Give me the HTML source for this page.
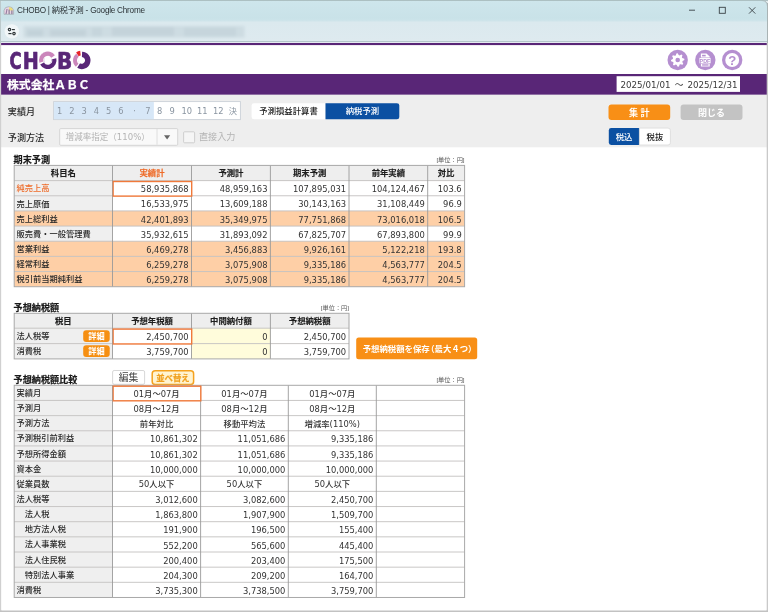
<!DOCTYPE html>
<html lang="ja"><head><meta charset="utf-8"><title>CHOBO | 納税予測</title>
<style>
html,body{margin:0;padding:0;}
body{width:768px;height:612px;overflow:hidden;background:#fff;position:relative;filter:blur(0.35px);
 font-family:"DejaVu Sans","Liberation Sans","Noto Sans CJK JP",sans-serif;color:#2b2b2b;}
#g{position:absolute;left:0;top:0;width:768px;height:612px;display:block;will-change:transform;}
#tx{position:absolute;left:0;top:0;width:768px;height:612px;will-change:transform;}
.t{position:absolute;white-space:nowrap;overflow:visible;box-sizing:border-box;}
.title{font-family:"Liberation Sans","Noto Sans CJK JP",sans-serif;font-size:8.2px;letter-spacing:-0.24px;color:#2c3438;}
.company{font-family:"Liberation Sans","Noto Sans CJK JP",sans-serif;font-size:11.85px;font-weight:bold;color:#fff;-webkit-text-stroke:0.25px #fff;}
.date{font-size:8.7px;text-align:center;color:#3a3a3a;}
.wd{font-family:"Noto Sans CJK JP",sans-serif;padding:0 4.2px;}
.wm{font-family:"Noto Sans CJK JP",sans-serif;}
.lbl{font-family:"Liberation Sans","Noto Sans CJK JP",sans-serif;font-size:9.1px;color:#2a2a2a;font-weight:500;}
.month{font-size:8.3px;text-align:center;color:#8a95a1;}
.tab{font-size:8.35px;font-weight:500;text-align:center;color:#222;font-family:"Liberation Sans","Noto Sans CJK JP",sans-serif;}
.tabon{color:#fff;}
.combo{font-size:8.55px;color:#b4b4b4;font-family:"DejaVu Sans","Noto Sans CJK JP",sans-serif;}
.chk{font-size:9.1px;color:#b4b4b4;font-family:"Liberation Sans","Noto Sans CJK JP",sans-serif;}
.btn{font-size:9.0px;font-weight:bold;color:#fff;text-align:center;font-family:"Liberation Sans","Noto Sans CJK JP",sans-serif;}
.tax{font-size:8.4px;font-weight:500;text-align:center;color:#222;font-family:"Liberation Sans","Noto Sans CJK JP",sans-serif;}
.taxon{color:#fff;}
.sec{font-size:9.1px;font-weight:bold;color:#1a1a1a;-webkit-text-stroke:0.22px #1a1a1a;font-family:"Liberation Sans","Noto Sans CJK JP",sans-serif;}
.unit{font-size:6.2px;color:#555;text-align:right;font-family:"Liberation Sans","Noto Sans CJK JP",sans-serif;}
.c{font-size:8.35px;color:#333;}
.h{text-align:center;font-weight:bold;color:#1e1e1e;-webkit-text-stroke:0.15px currentColor;font-family:"Liberation Sans","Noto Sans CJK JP",sans-serif;}
.l{padding-left:2.2px;font-weight:500;font-size:8.25px;font-family:"Liberation Sans","Noto Sans CJK JP",sans-serif;color:#2a2a2a;}
.ind{padding-left:10.6px;}
.n{text-align:right;padding-right:2.9px;}
.m{text-align:center;font-weight:500;font-family:"DejaVu Sans","Noto Sans CJK JP",sans-serif;}
.org{color:#ee6c2a;}
.det{font-size:8.2px;font-weight:bold;color:#fff;text-align:center;font-family:"Liberation Sans","Noto Sans CJK JP",sans-serif;}
.save{padding-left:2.2px;font-size:8.4px;font-weight:bold;color:#fff;text-align:center;font-family:"Liberation Sans","Noto Sans CJK JP",sans-serif;}
.edit{font-size:9.8px;color:#444;text-align:center;font-family:"Liberation Sans","Noto Sans CJK JP",sans-serif;}
.sort{font-size:8.4px;font-weight:bold;color:#f0a01e;-webkit-text-stroke:0.2px #f0a01e;text-align:center;font-family:"Liberation Sans","Noto Sans CJK JP",sans-serif;}
</style></head>
<body>
<svg id="g" width="768" height="612" viewBox="0 0 768 612">
<defs><linearGradient id="gtitle" x1="0" y1="0" x2="0" y2="1"><stop offset="0" stop-color="#cee6ec"/><stop offset="0.85" stop-color="#c9e2e8"/><stop offset="1" stop-color="#cce4ea"/></linearGradient><linearGradient id="gaddr" x1="0" y1="0" x2="0" y2="1"><stop offset="0" stop-color="#cfe4ea"/><stop offset="0.1" stop-color="#dbe9ee"/><stop offset="1" stop-color="#deeaef"/></linearGradient><filter id="blur" x="-5%" y="-30%" width="110%" height="160%"><feGaussianBlur stdDeviation="1.6"/></filter></defs>
<rect x="0.00" y="0.00" width="768.00" height="21.00" fill="url(#gtitle)" />
<rect x="0.00" y="20.40" width="768.00" height="21.00" fill="url(#gaddr)" />
<rect x="0.00" y="41.00" width="768.00" height="1.10" fill="#b3c6ca" />
<rect x="0.00" y="42.10" width="768.00" height="0.90" fill="#e4e8ef" />
<rect x="0.00" y="43.00" width="768.00" height="2.30" fill="#592677" />
<rect x="0.00" y="45.30" width="768.00" height="28.70" fill="#ffffff" />
<rect x="0.00" y="74.00" width="768.00" height="20.80" fill="#592677" />
<rect x="0.00" y="94.80" width="768.00" height="52.80" fill="#eeeeee" />
<rect x="0.00" y="147.50" width="768.00" height="464.50" fill="#ffffff" />
<g transform="translate(3.4,5.9)" opacity="0.9"><path d="M0.6 8.4 L0.6 4.4 Q1.4 0.8 5.3 0.8 Q9.6 0.8 10.2 4.4 L10.2 8.4 Z" fill="#ecd3e4" stroke="#97a3a8" stroke-width="0.7"/><path d="M5.6 1.4 Q9 1.2 9.6 4.6 L5.8 4.6 Z" fill="#f0df6e"/><rect x="2.6" y="3.2" width="1.1" height="5" fill="#8d6f96" transform="skewX(-12) translate(1.2,0)"/><rect x="5.2" y="3.6" width="1" height="4.6" fill="#6f5f7e"/><rect x="8" y="4.4" width="1" height="3.8" fill="#6f5f7e"/></g>
<line x1="689.00" y1="10.20" x2="695.00" y2="10.20" stroke="#3a4246" stroke-width="0.9" />
<rect x="719.30" y="7.30" width="6.00" height="6.00" fill="none" stroke="#3a4246" stroke-width="0.9"/>
<line x1="749.00" y1="7.30" x2="755.30" y2="13.60" stroke="#3a4246" stroke-width="0.9" />
<line x1="755.30" y1="7.30" x2="749.00" y2="13.60" stroke="#3a4246" stroke-width="0.9" />
<circle cx="11.8" cy="31.4" r="7.2" fill="#f1f6f8"/>
<g stroke="#2e3437" stroke-width="1.15" fill="none"><circle cx="9.5" cy="29.6" r="1.25"/><line x1="11.9" y1="29.6" x2="14.9" y2="29.6"/><circle cx="14" cy="33.6" r="1.25"/><line x1="8.4" y1="33.6" x2="11.6" y2="33.6"/></g>
<g filter="url(#blur)"><rect x="23.5" y="26" width="221" height="11.5" fill="#cddce2"/><rect x="27" y="29.5" width="16" height="7" fill="#c2d2d9"/><rect x="50" y="29.5" width="36" height="7" fill="#c3d2d9"/><rect x="92" y="27.5" width="10" height="9" fill="#c6d5dc"/><rect x="112" y="27" width="62" height="9" fill="#c4d3da"/><rect x="184" y="27.5" width="52" height="9" fill="#c6d5dc"/></g>
<text transform="translate(9.377,68.754) scale(0.1645,0.2305)" x="0" y="0" font-size="100" font-weight="bold" font-family="'DejaVu Sans','Liberation Sans',sans-serif" fill="#592677" stroke="#592677" stroke-width="3.65" stroke-linejoin="round">C</text>
<text transform="translate(22.669,68.900) scale(0.1924,0.2329)" x="0" y="0" font-size="100" font-weight="bold" font-family="'DejaVu Sans','Liberation Sans',sans-serif" fill="#592677" stroke="#592677" stroke-width="3.12" stroke-linejoin="round">H</text>
<text transform="translate(38.620,68.270) scale(0.2160,0.2199)" x="0" y="0" font-size="100" font-weight="bold" font-family="'DejaVu Sans','Liberation Sans',sans-serif" fill="#592677" stroke="#592677" stroke-width="2.78" stroke-linejoin="round">O</text>
<text transform="translate(57.100,68.900) scale(0.2000,0.2345)" x="0" y="0" font-size="100" font-weight="bold" font-family="'DejaVu Sans','Liberation Sans',sans-serif" fill="#592677" stroke="#592677" stroke-width="3.00" stroke-linejoin="round">B</text>
<text transform="translate(72.533,68.274) scale(0.2133,0.2172)" x="0" y="0" font-size="100" font-weight="bold" font-family="'DejaVu Sans','Liberation Sans',sans-serif" fill="#592677" stroke="#592677" stroke-width="2.81" stroke-linejoin="round">O</text>
<circle cx="47.8" cy="60.3" r="6.4" fill="none" stroke="#fff" stroke-width="5.6"/>
<path d="M54.20 58.70 A6.6 6.6 0 0 1 42.03 63.50" fill="none" stroke="#592677" stroke-width="4.3"/>
<path d="M41.49 62.23 A6.6 6.6 0 0 1 53.14 56.42" fill="none" stroke="#cb86bb" stroke-width="4.3"/>
<circle cx="81.6" cy="60.4" r="6.2" fill="none" stroke="#fff" stroke-width="6.2"/>
<path d="M82.01 54.40 A6.0 6.0 0 1 1 78.62 65.49" fill="none" stroke="#592677" stroke-width="5.4"/>
<path d="M77.18 65.30 A6.6 6.6 0 0 1 77.54 55.20" fill="none" stroke="#cb86bb" stroke-width="3.9"/>
<path d="M77.39 54.30 A7.0 7.0 0 0 1 80.45 53.15" fill="none" stroke="#e8232a" stroke-width="4.6"/>
<circle cx="677.7" cy="60" r="10.2" fill="#b58fd0"/>
<circle cx="705.3" cy="60" r="10.2" fill="#b58fd0"/>
<circle cx="732.2" cy="60" r="10.2" fill="#b58fd0"/>
<polygon points="684.27,58.69 684.40,60.00 682.60,60.98 682.32,61.91 683.27,63.72 682.44,64.74 680.48,64.16 679.61,64.62 679.01,66.57 677.70,66.70 676.72,64.90 675.79,64.62 673.98,65.57 672.96,64.74 673.54,62.78 673.08,61.91 671.13,61.31 671.00,60.00 672.80,59.02 673.08,58.09 672.13,56.28 672.96,55.26 674.92,55.84 675.79,55.38 676.39,53.43 677.70,53.30 678.68,55.10 679.61,55.38 681.42,54.43 682.44,55.26 681.86,57.22 682.32,58.09" fill="#fff"/>
<circle cx="677.7" cy="60" r="2.3" fill="#b58fd0"/>
<path d="M700.9 53.4 h5.6 l3.2 3.2 v10 h-8.8 Z" fill="#fff"/>
<rect x="699.0999999999999" y="57.8" width="11.8" height="5.6" fill="#fff" stroke="#b58fd0" stroke-width="0.5"/>
<rect x="702.0999999999999" y="54.8" width="3.6" height="1.6" fill="#b58fd0"/>
<rect x="702.0999999999999" y="64.3" width="6.4" height="1.3" fill="#b58fd0"/>
<text x="705.0" y="62.5" font-size="5.4" font-weight="bold" font-family="'Liberation Sans',sans-serif" fill="#b58fd0" text-anchor="middle">PDF</text>
<circle cx="732.2" cy="60" r="6.95" fill="#fff"/>
<text x="732.2" y="64.7" font-size="13.2" font-weight="bold" font-family="'Liberation Sans',sans-serif" fill="#b58fd0" text-anchor="middle">?</text>
<rect x="616.60" y="76.20" width="123.40" height="15.70" fill="#ffffff" />
<rect x="53.60" y="101.60" width="186.80" height="18.00" fill="#ffffff" stroke="#cbd1d8" stroke-width="0.9"/>
<rect x="54.05" y="102.05" width="99.80" height="17.10" fill="#d7e7f7" />
<path d="M254 103.2 H325.5 V119.3 H254 Q251.6 119.3 251.6 117 V105.6 Q251.6 103.2 254 103.2 Z" fill="#fff"/>
<path d="M325.5 103.2 H396.9 Q399.3 103.2 399.3 105.6 V117 Q399.3 119.3 396.9 119.3 H325.5 Z" fill="#0b50a2"/>
<rect x="59.70" y="128.60" width="118.00" height="16.70" fill="#f9f9f9" stroke="#cdcdcd" stroke-width="0.8" rx="1"/>
<line x1="157.00" y1="128.80" x2="157.00" y2="144.80" stroke="#d8d8d8" stroke-width="0.8" />
<path d="M164 135.3 h6.2 l-3.1 4.2 Z" fill="#666"/>
<rect x="183.60" y="131.80" width="11.00" height="11.00" fill="#f5f5f5" stroke="#cacaca" stroke-width="0.9" rx="1"/>
<rect x="608.50" y="104.40" width="61.70" height="15.50" fill="#f88f16" rx="3"/>
<rect x="680.60" y="104.40" width="61.90" height="15.50" fill="#c3c3c3" rx="3"/>
<path d="M611.2 128.1 H639.4 V145 H611.2 Q608.8 145 608.8 142.6 V130.5 Q608.8 128.1 611.2 128.1 Z" fill="#0b50a2"/>
<path d="M639.4 128.1 H668 Q670.4 128.1 670.4 130.5 V142.6 Q670.4 145 668 145 H639.4 Z" fill="#fff" stroke="#d6d6d6" stroke-width="0.7"/>
<rect x="14.20" y="165.40" width="450.40" height="121.32" fill="#ffffff" />
<rect x="14.20" y="165.40" width="450.40" height="15.20" fill="#eeeeee" />
<rect x="14.20" y="180.60" width="98.30" height="15.16" fill="#efefef" />
<rect x="14.20" y="195.76" width="98.30" height="15.16" fill="#efefef" />
<rect x="14.20" y="210.92" width="450.40" height="15.16" fill="#fecfa6" />
<rect x="14.20" y="226.08" width="98.30" height="15.16" fill="#efefef" />
<rect x="14.20" y="241.24" width="450.40" height="15.16" fill="#fecfa6" />
<rect x="14.20" y="256.40" width="450.40" height="15.16" fill="#fecfa6" />
<rect x="14.20" y="271.56" width="450.40" height="15.16" fill="#fecfa6" />
<line x1="14.20" y1="180.60" x2="464.60" y2="180.60" stroke="#c3c1bf" stroke-width="0.9" />
<line x1="14.20" y1="195.76" x2="464.60" y2="195.76" stroke="#c3c1bf" stroke-width="0.9" />
<line x1="14.20" y1="210.92" x2="464.60" y2="210.92" stroke="#c3c1bf" stroke-width="0.9" />
<line x1="14.20" y1="226.08" x2="464.60" y2="226.08" stroke="#c3c1bf" stroke-width="0.9" />
<line x1="14.20" y1="241.24" x2="464.60" y2="241.24" stroke="#c3c1bf" stroke-width="0.9" />
<line x1="14.20" y1="256.40" x2="464.60" y2="256.40" stroke="#c3c1bf" stroke-width="0.9" />
<line x1="14.20" y1="271.56" x2="464.60" y2="271.56" stroke="#c3c1bf" stroke-width="0.9" />
<line x1="112.50" y1="165.40" x2="112.50" y2="286.72" stroke="#9a9a9a" stroke-width="0.9" />
<line x1="191.50" y1="165.40" x2="191.50" y2="286.72" stroke="#9a9a9a" stroke-width="0.9" />
<line x1="270.40" y1="165.40" x2="270.40" y2="286.72" stroke="#9a9a9a" stroke-width="0.9" />
<line x1="349.00" y1="165.40" x2="349.00" y2="286.72" stroke="#9a9a9a" stroke-width="0.9" />
<line x1="427.70" y1="165.40" x2="427.70" y2="286.72" stroke="#9a9a9a" stroke-width="0.9" />
<rect x="14.20" y="165.40" width="450.40" height="121.32" fill="none" stroke="#a8a8a8" stroke-width="1"/>
<rect x="113.10" y="181.50" width="78.60" height="14.61" fill="#ffffff" stroke="#f0793a" stroke-width="1.4"/>
<line x1="112.50" y1="181.00" x2="112.50" y2="196.56" stroke="#9a9a9a" stroke-width="0.9" opacity="0.55"/>
<rect x="14.20" y="313.30" width="334.80" height="45.60" fill="#ffffff" />
<rect x="14.20" y="313.30" width="334.80" height="14.90" fill="#eeeeee" />
<rect x="14.20" y="328.20" width="98.30" height="15.40" fill="#efefef" />
<rect x="14.20" y="343.60" width="98.30" height="15.30" fill="#efefef" />
<rect x="191.50" y="328.20" width="78.90" height="15.40" fill="#fffcdb" />
<rect x="191.50" y="343.60" width="78.90" height="15.30" fill="#fffcdb" />
<line x1="14.20" y1="328.20" x2="349.00" y2="328.20" stroke="#c3c1bf" stroke-width="0.9" />
<line x1="14.20" y1="343.60" x2="349.00" y2="343.60" stroke="#c3c1bf" stroke-width="0.9" />
<line x1="112.50" y1="313.30" x2="112.50" y2="358.90" stroke="#9a9a9a" stroke-width="0.9" />
<line x1="191.50" y1="313.30" x2="191.50" y2="358.90" stroke="#9a9a9a" stroke-width="0.9" />
<line x1="270.40" y1="313.30" x2="270.40" y2="358.90" stroke="#9a9a9a" stroke-width="0.9" />
<rect x="14.20" y="313.30" width="334.80" height="45.60" fill="none" stroke="#a8a8a8" stroke-width="1"/>
<rect x="113.10" y="329.10" width="78.60" height="14.85" fill="#ffffff" stroke="#f0793a" stroke-width="1.4"/>
<line x1="112.50" y1="328.60" x2="112.50" y2="344.40" stroke="#9a9a9a" stroke-width="0.9" opacity="0.55"/>
<rect x="83.20" y="330.20" width="26.50" height="11.70" fill="#f68f12" rx="3"/>
<rect x="83.20" y="345.20" width="26.50" height="11.70" fill="#f68f12" rx="3"/>
<rect x="356.20" y="337.50" width="121.00" height="21.80" fill="#f88f16" rx="2.5"/>
<rect x="112.60" y="370.50" width="32.00" height="13.80" fill="#ffffff" stroke="#cdcdcd" stroke-width="0.8" rx="1.5"/>
<rect x="152.20" y="370.70" width="41.40" height="13.70" fill="#fff4d2" stroke="#f5a21e" stroke-width="1.5" rx="3"/>
<rect x="14.20" y="385.30" width="450.40" height="212.17" fill="#ffffff" />
<rect x="14.20" y="385.30" width="98.30" height="15.15" fill="#efefef" />
<rect x="14.20" y="400.45" width="98.30" height="15.16" fill="#efefef" />
<rect x="14.20" y="415.61" width="98.30" height="15.15" fill="#efefef" />
<rect x="14.20" y="430.76" width="98.30" height="15.16" fill="#efefef" />
<rect x="14.20" y="445.92" width="98.30" height="15.15" fill="#efefef" />
<rect x="14.20" y="461.07" width="98.30" height="15.16" fill="#efefef" />
<rect x="14.20" y="476.23" width="98.30" height="15.15" fill="#efefef" />
<rect x="14.20" y="491.38" width="98.30" height="15.16" fill="#efefef" />
<rect x="14.20" y="506.54" width="98.30" height="15.15" fill="#efefef" />
<rect x="14.20" y="521.69" width="98.30" height="15.16" fill="#efefef" />
<rect x="14.20" y="536.85" width="98.30" height="15.15" fill="#efefef" />
<rect x="14.20" y="552.00" width="98.30" height="15.15" fill="#efefef" />
<rect x="14.20" y="567.16" width="98.30" height="15.16" fill="#efefef" />
<rect x="14.20" y="582.32" width="98.30" height="15.15" fill="#efefef" />
<line x1="14.20" y1="400.45" x2="464.60" y2="400.45" stroke="#c3c1bf" stroke-width="0.9" />
<line x1="14.20" y1="415.61" x2="464.60" y2="415.61" stroke="#c3c1bf" stroke-width="0.9" />
<line x1="14.20" y1="430.76" x2="464.60" y2="430.76" stroke="#c3c1bf" stroke-width="0.9" />
<line x1="14.20" y1="445.92" x2="464.60" y2="445.92" stroke="#c3c1bf" stroke-width="0.9" />
<line x1="14.20" y1="461.07" x2="464.60" y2="461.07" stroke="#c3c1bf" stroke-width="0.9" />
<line x1="14.20" y1="476.23" x2="464.60" y2="476.23" stroke="#c3c1bf" stroke-width="0.9" />
<line x1="14.20" y1="491.38" x2="464.60" y2="491.38" stroke="#c3c1bf" stroke-width="0.9" />
<line x1="14.20" y1="506.54" x2="464.60" y2="506.54" stroke="#c3c1bf" stroke-width="0.9" />
<line x1="14.20" y1="521.69" x2="464.60" y2="521.69" stroke="#c3c1bf" stroke-width="0.9" />
<line x1="14.20" y1="536.85" x2="464.60" y2="536.85" stroke="#c3c1bf" stroke-width="0.9" />
<line x1="14.20" y1="552.00" x2="464.60" y2="552.00" stroke="#c3c1bf" stroke-width="0.9" />
<line x1="14.20" y1="567.16" x2="464.60" y2="567.16" stroke="#c3c1bf" stroke-width="0.9" />
<line x1="14.20" y1="582.32" x2="464.60" y2="582.32" stroke="#c3c1bf" stroke-width="0.9" />
<line x1="112.50" y1="385.30" x2="112.50" y2="597.47" stroke="#9a9a9a" stroke-width="0.9" />
<line x1="200.60" y1="385.30" x2="200.60" y2="597.47" stroke="#9a9a9a" stroke-width="0.9" />
<line x1="288.30" y1="385.30" x2="288.30" y2="597.47" stroke="#9a9a9a" stroke-width="0.9" />
<line x1="376.30" y1="385.30" x2="376.30" y2="597.47" stroke="#9a9a9a" stroke-width="0.9" />
<rect x="14.20" y="385.30" width="450.40" height="212.17" fill="none" stroke="#a8a8a8" stroke-width="1"/>
<rect x="113.10" y="386.20" width="87.70" height="14.61" fill="#ffffff" stroke="#f0793a" stroke-width="1.4"/>
<line x1="112.50" y1="385.70" x2="112.50" y2="401.25" stroke="#9a9a9a" stroke-width="0.9" opacity="0.55"/>
<path d="M768 0 H761.5 Q767.6 0.4 768 6.5 Z" fill="#e4ecee"/>
<path d="M761.5 0.45 Q767.5 0.5 767.5 6.5" fill="none" stroke="#a9b6b8" stroke-width="0.9"/>
<path d="M0 0 H5 Q0.4 0.4 0 5 Z" fill="#dfe8ea"/>
<path d="M0 612 H5.5 Q0.5 611.5 0 606.5 Z" fill="#e6e6e6"/>
<path d="M768 612 H762.5 Q767.5 611.5 768 606.5 Z" fill="#e6e6e6"/>
<rect x="0.00" y="0.00" width="1.00" height="43.00" fill="#bcc9cb" />
<rect x="0.00" y="43.00" width="1.15" height="569.00" fill="#d0d0d0" />
<rect x="767.00" y="3.00" width="1.00" height="40.00" fill="#a9b3b4" />
<rect x="766.70" y="43.00" width="1.30" height="569.00" fill="#c9c9c9" />
<rect x="0.00" y="0.00" width="768.00" height="0.90" fill="#a9bbbe" />
<rect x="0.00" y="610.50" width="768.00" height="1.50" fill="#c2c2c2" />
</svg>
<div id="tx">
<div class="t title" style="left:17.00px;top:3.50px;width:200.00px;height:13.00px;line-height:13.00px;">CHOBO | 納税予測 - Google Chrome</div>
<div class="t company" style="left:7.00px;top:77.00px;width:120.00px;height:16.00px;line-height:16.00px;">株式会社ＡＢＣ</div>
<div class="t date" style="left:617.20px;top:76.70px;width:123.60px;height:15.40px;line-height:15.40px;">2025/01/01<span class="wd">～</span>2025/12/31</div>
<div class="t lbl" style="left:7.80px;top:104.25px;width:50.00px;height:17.00px;line-height:17.00px;">実績月</div>
<div class="t lbl" style="left:7.80px;top:129.55px;width:50.00px;height:17.00px;line-height:17.00px;">予測方法</div>
<div class="t month" style="left:49.70px;top:102.80px;width:20.00px;height:17.60px;line-height:17.60px;">1</div>
<div class="t month" style="left:62.00px;top:102.80px;width:20.00px;height:17.60px;line-height:17.60px;">2</div>
<div class="t month" style="left:74.20px;top:102.80px;width:20.00px;height:17.60px;line-height:17.60px;">3</div>
<div class="t month" style="left:86.40px;top:102.80px;width:20.00px;height:17.60px;line-height:17.60px;">4</div>
<div class="t month" style="left:98.60px;top:102.80px;width:20.00px;height:17.60px;line-height:17.60px;">5</div>
<div class="t month" style="left:110.80px;top:102.80px;width:20.00px;height:17.60px;line-height:17.60px;">6</div>
<div class="t month" style="left:124.70px;top:102.80px;width:20.00px;height:17.60px;line-height:17.60px;">·</div>
<div class="t month" style="left:138.00px;top:102.80px;width:20.00px;height:17.60px;line-height:17.60px;">7</div>
<div class="t month" style="left:149.70px;top:102.80px;width:20.00px;height:17.60px;line-height:17.60px;">8</div>
<div class="t month" style="left:162.20px;top:102.80px;width:20.00px;height:17.60px;line-height:17.60px;">9</div>
<div class="t month" style="left:176.70px;top:102.80px;width:20.00px;height:17.60px;line-height:17.60px;">10</div>
<div class="t month" style="left:192.20px;top:102.80px;width:20.00px;height:17.60px;line-height:17.60px;">11</div>
<div class="t month" style="left:208.30px;top:102.80px;width:20.00px;height:17.60px;line-height:17.60px;">12</div>
<div class="t month" style="left:223.00px;top:102.80px;width:20.00px;height:17.60px;line-height:17.60px;">決</div>
<div class="t tab" style="left:251.60px;top:103.20px;width:73.90px;height:16.10px;line-height:16.10px;">予測損益計算書</div>
<div class="t tab tabon" style="left:325.50px;top:103.20px;width:73.80px;height:16.10px;line-height:16.10px;">納税予測</div>
<div class="t combo" style="left:65.60px;top:129.20px;width:92.00px;height:16.80px;line-height:16.80px;">増減率指定（110%）</div>
<div class="t chk" style="left:199.00px;top:129.30px;width:60.00px;height:17.00px;line-height:17.00px;">直接入力</div>
<div class="t btn" style="left:608.50px;top:105.70px;width:61.70px;height:15.50px;line-height:15.50px;">集 計</div>
<div class="t btn" style="left:680.60px;top:105.70px;width:61.90px;height:15.50px;line-height:15.50px;">閉じる</div>
<div class="t tax taxon" style="left:608.80px;top:129.40px;width:30.60px;height:16.90px;line-height:16.90px;">税込</div>
<div class="t tax" style="left:639.40px;top:129.40px;width:31.00px;height:16.90px;line-height:16.90px;">税抜</div>
<div class="t sec" style="left:13.60px;top:151.70px;width:100.00px;height:16.00px;line-height:16.00px;">期末予測</div>
<div class="t unit" style="left:419.00px;top:155.30px;width:45.60px;height:10.00px;line-height:10.00px;">[単位：円]</div>
<div class="t c h" style="left:14.20px;top:166.00px;width:98.30px;height:15.20px;line-height:15.20px;">科目名</div>
<div class="t c h org" style="left:112.50px;top:166.00px;width:79.00px;height:15.20px;line-height:15.20px;">実績計</div>
<div class="t c h" style="left:191.50px;top:166.00px;width:78.90px;height:15.20px;line-height:15.20px;">予測計</div>
<div class="t c h" style="left:270.40px;top:166.00px;width:78.60px;height:15.20px;line-height:15.20px;">期末予測</div>
<div class="t c h" style="left:349.00px;top:166.00px;width:78.70px;height:15.20px;line-height:15.20px;">前年実績</div>
<div class="t c h" style="left:427.70px;top:166.00px;width:36.90px;height:15.20px;line-height:15.20px;">対比</div>
<div class="t c l org" style="left:14.20px;top:181.40px;width:98.30px;height:15.16px;line-height:15.16px;">純売上高</div>
<div class="t c n" style="left:112.50px;top:182.30px;width:79.00px;height:15.16px;line-height:15.16px;">58,935,868</div>
<div class="t c n" style="left:191.50px;top:182.30px;width:78.90px;height:15.16px;line-height:15.16px;">48,959,163</div>
<div class="t c n" style="left:270.40px;top:182.30px;width:78.60px;height:15.16px;line-height:15.16px;">107,895,031</div>
<div class="t c n" style="left:349.00px;top:182.30px;width:78.70px;height:15.16px;line-height:15.16px;">104,124,467</div>
<div class="t c n" style="left:427.70px;top:182.30px;width:36.90px;height:15.16px;line-height:15.16px;">103.6</div>
<div class="t c l" style="left:14.20px;top:196.56px;width:98.30px;height:15.16px;line-height:15.16px;">売上原価</div>
<div class="t c n" style="left:112.50px;top:197.46px;width:79.00px;height:15.16px;line-height:15.16px;">16,533,975</div>
<div class="t c n" style="left:191.50px;top:197.46px;width:78.90px;height:15.16px;line-height:15.16px;">13,609,188</div>
<div class="t c n" style="left:270.40px;top:197.46px;width:78.60px;height:15.16px;line-height:15.16px;">30,143,163</div>
<div class="t c n" style="left:349.00px;top:197.46px;width:78.70px;height:15.16px;line-height:15.16px;">31,108,449</div>
<div class="t c n" style="left:427.70px;top:197.46px;width:36.90px;height:15.16px;line-height:15.16px;">96.9</div>
<div class="t c l" style="left:14.20px;top:211.72px;width:98.30px;height:15.16px;line-height:15.16px;">売上総利益</div>
<div class="t c n" style="left:112.50px;top:212.62px;width:79.00px;height:15.16px;line-height:15.16px;">42,401,893</div>
<div class="t c n" style="left:191.50px;top:212.62px;width:78.90px;height:15.16px;line-height:15.16px;">35,349,975</div>
<div class="t c n" style="left:270.40px;top:212.62px;width:78.60px;height:15.16px;line-height:15.16px;">77,751,868</div>
<div class="t c n" style="left:349.00px;top:212.62px;width:78.70px;height:15.16px;line-height:15.16px;">73,016,018</div>
<div class="t c n" style="left:427.70px;top:212.62px;width:36.90px;height:15.16px;line-height:15.16px;">106.5</div>
<div class="t c l" style="left:14.20px;top:226.88px;width:98.30px;height:15.16px;line-height:15.16px;">販売費・一般管理費</div>
<div class="t c n" style="left:112.50px;top:227.78px;width:79.00px;height:15.16px;line-height:15.16px;">35,932,615</div>
<div class="t c n" style="left:191.50px;top:227.78px;width:78.90px;height:15.16px;line-height:15.16px;">31,893,092</div>
<div class="t c n" style="left:270.40px;top:227.78px;width:78.60px;height:15.16px;line-height:15.16px;">67,825,707</div>
<div class="t c n" style="left:349.00px;top:227.78px;width:78.70px;height:15.16px;line-height:15.16px;">67,893,800</div>
<div class="t c n" style="left:427.70px;top:227.78px;width:36.90px;height:15.16px;line-height:15.16px;">99.9</div>
<div class="t c l" style="left:14.20px;top:242.04px;width:98.30px;height:15.16px;line-height:15.16px;">営業利益</div>
<div class="t c n" style="left:112.50px;top:242.94px;width:79.00px;height:15.16px;line-height:15.16px;">6,469,278</div>
<div class="t c n" style="left:191.50px;top:242.94px;width:78.90px;height:15.16px;line-height:15.16px;">3,456,883</div>
<div class="t c n" style="left:270.40px;top:242.94px;width:78.60px;height:15.16px;line-height:15.16px;">9,926,161</div>
<div class="t c n" style="left:349.00px;top:242.94px;width:78.70px;height:15.16px;line-height:15.16px;">5,122,218</div>
<div class="t c n" style="left:427.70px;top:242.94px;width:36.90px;height:15.16px;line-height:15.16px;">193.8</div>
<div class="t c l" style="left:14.20px;top:257.20px;width:98.30px;height:15.16px;line-height:15.16px;">経常利益</div>
<div class="t c n" style="left:112.50px;top:258.10px;width:79.00px;height:15.16px;line-height:15.16px;">6,259,278</div>
<div class="t c n" style="left:191.50px;top:258.10px;width:78.90px;height:15.16px;line-height:15.16px;">3,075,908</div>
<div class="t c n" style="left:270.40px;top:258.10px;width:78.60px;height:15.16px;line-height:15.16px;">9,335,186</div>
<div class="t c n" style="left:349.00px;top:258.10px;width:78.70px;height:15.16px;line-height:15.16px;">4,563,777</div>
<div class="t c n" style="left:427.70px;top:258.10px;width:36.90px;height:15.16px;line-height:15.16px;">204.5</div>
<div class="t c l" style="left:14.20px;top:272.36px;width:98.30px;height:15.16px;line-height:15.16px;">税引前当期純利益</div>
<div class="t c n" style="left:112.50px;top:273.26px;width:79.00px;height:15.16px;line-height:15.16px;">6,259,278</div>
<div class="t c n" style="left:191.50px;top:273.26px;width:78.90px;height:15.16px;line-height:15.16px;">3,075,908</div>
<div class="t c n" style="left:270.40px;top:273.26px;width:78.60px;height:15.16px;line-height:15.16px;">9,335,186</div>
<div class="t c n" style="left:349.00px;top:273.26px;width:78.70px;height:15.16px;line-height:15.16px;">4,563,777</div>
<div class="t c n" style="left:427.70px;top:273.26px;width:36.90px;height:15.16px;line-height:15.16px;">204.5</div>
<div class="t sec" style="left:13.60px;top:299.70px;width:100.00px;height:16.00px;line-height:16.00px;">予想納税額</div>
<div class="t unit" style="left:303.40px;top:303.30px;width:45.60px;height:10.00px;line-height:10.00px;">[単位：円]</div>
<div class="t c h" style="left:14.20px;top:313.90px;width:98.30px;height:14.90px;line-height:14.90px;">税目</div>
<div class="t c h" style="left:112.50px;top:313.90px;width:79.00px;height:14.90px;line-height:14.90px;">予想年税額</div>
<div class="t c h" style="left:191.50px;top:313.90px;width:78.90px;height:14.90px;line-height:14.90px;">中間納付額</div>
<div class="t c h" style="left:270.40px;top:313.90px;width:78.60px;height:14.90px;line-height:14.90px;">予想納税額</div>
<div class="t c l" style="left:14.20px;top:329.00px;width:98.30px;height:15.40px;line-height:15.40px;">法人税等</div>
<div class="t c n" style="left:112.50px;top:329.90px;width:79.00px;height:15.40px;line-height:15.40px;">2,450,700</div>
<div class="t c n" style="left:191.50px;top:329.90px;width:78.90px;height:15.40px;line-height:15.40px;">0</div>
<div class="t c n" style="left:270.40px;top:329.90px;width:78.60px;height:15.40px;line-height:15.40px;">2,450,700</div>
<div class="t c l" style="left:14.20px;top:344.40px;width:98.30px;height:15.30px;line-height:15.30px;">消費税</div>
<div class="t c n" style="left:112.50px;top:345.30px;width:79.00px;height:15.30px;line-height:15.30px;">3,759,700</div>
<div class="t c n" style="left:191.50px;top:345.30px;width:78.90px;height:15.30px;line-height:15.30px;">0</div>
<div class="t c n" style="left:270.40px;top:345.30px;width:78.60px;height:15.30px;line-height:15.30px;">3,759,700</div>
<div class="t det" style="left:83.20px;top:331.10px;width:26.50px;height:11.70px;line-height:11.70px;">詳細</div>
<div class="t det" style="left:83.20px;top:346.10px;width:26.50px;height:11.70px;line-height:11.70px;">詳細</div>
<div class="t save" style="left:356.20px;top:338.70px;width:121.00px;height:21.80px;line-height:21.80px;">予想納税額を保存<span style="margin-left:-3.6px">（</span>最大４つ<span style="margin-right:-3.6px">）</span></div>
<div class="t sec" style="left:13.60px;top:371.70px;width:100.00px;height:16.00px;line-height:16.00px;">予想納税額比較</div>
<div class="t unit" style="left:419.00px;top:375.30px;width:45.60px;height:10.00px;line-height:10.00px;">[単位：円]</div>
<div class="t edit" style="left:112.60px;top:370.50px;width:32.00px;height:13.80px;line-height:13.80px;">編集</div>
<div class="t sort" style="left:151.50px;top:371.10px;width:42.80px;height:14.60px;line-height:14.60px;">並べ替え</div>
<div class="t c l" style="left:14.20px;top:385.90px;width:98.30px;height:15.15px;line-height:15.15px;">実績月</div>
<div class="t c m" style="left:112.50px;top:386.20px;width:88.10px;height:15.15px;line-height:15.15px;">01月<span class="wm">～</span>07月</div>
<div class="t c m" style="left:200.60px;top:386.20px;width:87.70px;height:15.15px;line-height:15.15px;">01月<span class="wm">～</span>07月</div>
<div class="t c m" style="left:288.30px;top:386.20px;width:88.00px;height:15.15px;line-height:15.15px;">01月<span class="wm">～</span>07月</div>
<div class="t c l" style="left:14.20px;top:401.06px;width:98.30px;height:15.16px;line-height:15.16px;">予測月</div>
<div class="t c m" style="left:112.50px;top:401.35px;width:88.10px;height:15.16px;line-height:15.16px;">08月<span class="wm">～</span>12月</div>
<div class="t c m" style="left:200.60px;top:401.35px;width:87.70px;height:15.16px;line-height:15.16px;">08月<span class="wm">～</span>12月</div>
<div class="t c m" style="left:288.30px;top:401.35px;width:88.00px;height:15.16px;line-height:15.16px;">08月<span class="wm">～</span>12月</div>
<div class="t c l" style="left:14.20px;top:416.21px;width:98.30px;height:15.15px;line-height:15.15px;">予測方法</div>
<div class="t c m" style="left:112.50px;top:416.51px;width:88.10px;height:15.15px;line-height:15.15px;">前年対比</div>
<div class="t c m" style="left:200.60px;top:416.51px;width:87.70px;height:15.15px;line-height:15.15px;">移動平均法</div>
<div class="t c m" style="left:288.30px;top:416.51px;width:88.00px;height:15.15px;line-height:15.15px;">増減率(110%)</div>
<div class="t c l" style="left:14.20px;top:431.37px;width:98.30px;height:15.16px;line-height:15.16px;">予測税引前利益</div>
<div class="t c n" style="left:112.50px;top:432.46px;width:88.10px;height:15.16px;line-height:15.16px;">10,861,302</div>
<div class="t c n" style="left:200.60px;top:432.46px;width:87.70px;height:15.16px;line-height:15.16px;">11,051,686</div>
<div class="t c n" style="left:288.30px;top:432.46px;width:88.00px;height:15.16px;line-height:15.16px;">9,335,186</div>
<div class="t c l" style="left:14.20px;top:446.52px;width:98.30px;height:15.15px;line-height:15.15px;">予想所得金額</div>
<div class="t c n" style="left:112.50px;top:447.62px;width:88.10px;height:15.15px;line-height:15.15px;">10,861,302</div>
<div class="t c n" style="left:200.60px;top:447.62px;width:87.70px;height:15.15px;line-height:15.15px;">11,051,686</div>
<div class="t c n" style="left:288.30px;top:447.62px;width:88.00px;height:15.15px;line-height:15.15px;">9,335,186</div>
<div class="t c l" style="left:14.20px;top:461.68px;width:98.30px;height:15.16px;line-height:15.16px;">資本金</div>
<div class="t c n" style="left:112.50px;top:462.77px;width:88.10px;height:15.16px;line-height:15.16px;">10,000,000</div>
<div class="t c n" style="left:200.60px;top:462.77px;width:87.70px;height:15.16px;line-height:15.16px;">10,000,000</div>
<div class="t c n" style="left:288.30px;top:462.77px;width:88.00px;height:15.16px;line-height:15.16px;">10,000,000</div>
<div class="t c l" style="left:14.20px;top:476.83px;width:98.30px;height:15.15px;line-height:15.15px;">従業員数</div>
<div class="t c m" style="left:112.50px;top:477.13px;width:88.10px;height:15.15px;line-height:15.15px;">50人以下</div>
<div class="t c m" style="left:200.60px;top:477.13px;width:87.70px;height:15.15px;line-height:15.15px;">50人以下</div>
<div class="t c m" style="left:288.30px;top:477.13px;width:88.00px;height:15.15px;line-height:15.15px;">50人以下</div>
<div class="t c l" style="left:14.20px;top:491.99px;width:98.30px;height:15.16px;line-height:15.16px;">法人税等</div>
<div class="t c n" style="left:112.50px;top:493.08px;width:88.10px;height:15.16px;line-height:15.16px;">3,012,600</div>
<div class="t c n" style="left:200.60px;top:493.08px;width:87.70px;height:15.16px;line-height:15.16px;">3,082,600</div>
<div class="t c n" style="left:288.30px;top:493.08px;width:88.00px;height:15.16px;line-height:15.16px;">2,450,700</div>
<div class="t c l ind" style="left:14.20px;top:507.14px;width:98.30px;height:15.15px;line-height:15.15px;">法人税</div>
<div class="t c n" style="left:112.50px;top:508.24px;width:88.10px;height:15.15px;line-height:15.15px;">1,863,800</div>
<div class="t c n" style="left:200.60px;top:508.24px;width:87.70px;height:15.15px;line-height:15.15px;">1,907,900</div>
<div class="t c n" style="left:288.30px;top:508.24px;width:88.00px;height:15.15px;line-height:15.15px;">1,509,700</div>
<div class="t c l ind" style="left:14.20px;top:522.29px;width:98.30px;height:15.16px;line-height:15.16px;">地方法人税</div>
<div class="t c n" style="left:112.50px;top:523.39px;width:88.10px;height:15.16px;line-height:15.16px;">191,900</div>
<div class="t c n" style="left:200.60px;top:523.39px;width:87.70px;height:15.16px;line-height:15.16px;">196,500</div>
<div class="t c n" style="left:288.30px;top:523.39px;width:88.00px;height:15.16px;line-height:15.16px;">155,400</div>
<div class="t c l ind" style="left:14.20px;top:537.45px;width:98.30px;height:15.15px;line-height:15.15px;">法人事業税</div>
<div class="t c n" style="left:112.50px;top:538.55px;width:88.10px;height:15.15px;line-height:15.15px;">552,200</div>
<div class="t c n" style="left:200.60px;top:538.55px;width:87.70px;height:15.15px;line-height:15.15px;">565,600</div>
<div class="t c n" style="left:288.30px;top:538.55px;width:88.00px;height:15.15px;line-height:15.15px;">445,400</div>
<div class="t c l ind" style="left:14.20px;top:552.61px;width:98.30px;height:15.15px;line-height:15.15px;">法人住民税</div>
<div class="t c n" style="left:112.50px;top:553.71px;width:88.10px;height:15.15px;line-height:15.15px;">200,400</div>
<div class="t c n" style="left:200.60px;top:553.71px;width:87.70px;height:15.15px;line-height:15.15px;">203,400</div>
<div class="t c n" style="left:288.30px;top:553.71px;width:88.00px;height:15.15px;line-height:15.15px;">175,500</div>
<div class="t c l ind" style="left:14.20px;top:567.76px;width:98.30px;height:15.16px;line-height:15.16px;">特別法人事業</div>
<div class="t c n" style="left:112.50px;top:568.86px;width:88.10px;height:15.16px;line-height:15.16px;">204,300</div>
<div class="t c n" style="left:200.60px;top:568.86px;width:87.70px;height:15.16px;line-height:15.16px;">209,200</div>
<div class="t c n" style="left:288.30px;top:568.86px;width:88.00px;height:15.16px;line-height:15.16px;">164,700</div>
<div class="t c l" style="left:14.20px;top:582.92px;width:98.30px;height:15.15px;line-height:15.15px;">消費税</div>
<div class="t c n" style="left:112.50px;top:584.02px;width:88.10px;height:15.15px;line-height:15.15px;">3,735,300</div>
<div class="t c n" style="left:200.60px;top:584.02px;width:87.70px;height:15.15px;line-height:15.15px;">3,738,500</div>
<div class="t c n" style="left:288.30px;top:584.02px;width:88.00px;height:15.15px;line-height:15.15px;">3,759,700</div>
</div>
</body></html>
